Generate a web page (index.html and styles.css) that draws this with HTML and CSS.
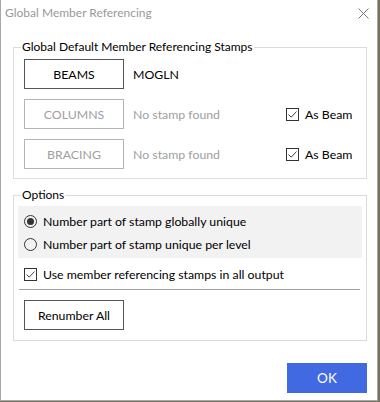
FILE: index.html
```html
<!DOCTYPE html>
<html lang="en">
<head>
  <meta charset="UTF-8">
  <meta name="viewport" content="width=device-width, initial-scale=1.0">
  <title>Global Member Referencing</title>
  <link rel="stylesheet" href="styles.css">
</head>
<body>
  <div class="window">
    <div class="titlebar">
      <span class="title">Global Member Referencing</span>
      <svg class="close" width="11" height="11" viewBox="0 0 11 11">
        <path d="M0.5 0.5 L10.5 10.5 M10.5 0.5 L0.5 10.5" stroke="#777" stroke-width="1" fill="none"/>
      </svg>
    </div>

    <!-- Stamps -->
    <fieldset class="group">
      <legend>Global Default Member Referencing Stamps</legend>
      <div class="group-body stamps">
        <button class="btn">BEAMS</button>
        <span class="stamp">MOGLN</span>
        <span></span>

        <button class="btn disabled">COLUMNS</button>
        <span class="stamp muted">No stamp found</span>
        <label class="check">
          <span class="box">
            <svg width="11" height="11" viewBox="0 0 11 11"><path d="M1.5 5.5 L4.2 8.2 L9.5 2.5" stroke="#444" stroke-width="1" fill="none"/></svg>
          </span>
          As Beam
        </label>

        <button class="btn disabled">BRACING</button>
        <span class="stamp muted">No stamp found</span>
        <label class="check">
          <span class="box">
            <svg width="11" height="11" viewBox="0 0 11 11"><path d="M1.5 5.5 L4.2 8.2 L9.5 2.5" stroke="#444" stroke-width="1" fill="none"/></svg>
          </span>
          As Beam
        </label>
      </div>
    </fieldset>

    <!-- Options -->
    <fieldset class="group options">
      <legend>Options</legend>
      <div class="group-body">
        <div class="radio-panel">
          <label class="radio-row">
            <span class="radio checked"></span>
            Number part of stamp globally unique
          </label>
          <label class="radio-row">
            <span class="radio"></span>
            Number part of stamp unique per level
          </label>
        </div>
        <label class="check check-row">
          <span class="box">
            <svg width="11" height="11" viewBox="0 0 11 11"><path d="M1.5 5.5 L4.2 8.2 L9.5 2.5" stroke="#444" stroke-width="1" fill="none"/></svg>
          </span>
          Use member referencing stamps in all output
        </label>
        <hr class="separator">
        <button class="btn renumber">Renumber All</button>
      </div>
    </fieldset>

    <div class="footer">
      <button class="ok">OK</button>
    </div>
  </div>
</body>
</html>
```
FILE: styles.css
```css
body {
  margin: 0;
  background-color: #76735a;
  font-family: Lato, "Noto Sans", sans-serif;
  font-size: 12.3px;
  color: #000;
}

.window {
  width: 378px;
  height: 401px;
  box-sizing: border-box;
  background-color: #fff;
  border: 1px solid #a8a8a8;
  border-top: none;
  display: flex;
  flex-direction: column;
}

.titlebar {
  height: 40px;
  display: flex;
  align-items: flex-start;
  padding: 5px 0 0 4px;
  box-sizing: border-box;
}

.title {
  line-height: 16px;
  font-size: 12px;
  color: #999;
}

.close {
  margin: 3px 8px 0 auto;
}

.group {
  margin: 0 10px 0 12px;
  padding: 0;
  border: 1px solid #dcdcdc;
  min-width: 0;
}

.group legend {
  margin-left: 7px;
  padding: 0 1px;
  line-height: 14px;
  font-size: 12px;
}

.stamps {
  display: grid;
  grid-template-columns: 100px 144px auto;
  grid-auto-rows: 30px;
  column-gap: 9px;
  row-gap: 10px;
  align-items: center;
  padding: 5px 0 9px 10px;
}

.btn {
  width: 100px;
  height: 30px;
  box-sizing: border-box;
  border: 1px solid #555;
  background-color: #fff;
  font-family: inherit;
  font-size: inherit;
  color: #000;
  padding: 0;
}

.btn.disabled {
  border-color: #b4b4b4;
  color: #a0a0a0;
}

.muted {
  color: #a0a0a0;
}

.check {
  display: flex;
  align-items: center;
  gap: 6px;
}

.box {
  width: 13px;
  height: 13px;
  box-sizing: border-box;
  border: 1px solid #333;
  display: flex;
  align-items: center;
  justify-content: center;
}

.options {
  margin-top: 9px;
}

.options .group-body {
  padding: 4px 4px 10px 4px;
}

.radio-panel {
  background-color: #f2f2f2;
  padding: 4px 0 2px 6px;
}

.radio-row {
  height: 23px;
  display: flex;
  align-items: center;
  gap: 6px;
}

.radio {
  width: 13px;
  height: 13px;
  box-sizing: border-box;
  border: 1px solid #333;
  border-radius: 50%;
  display: flex;
  align-items: center;
  justify-content: center;
}

.radio.checked::after {
  content: "";
  width: 7px;
  height: 7px;
  border-radius: 50%;
  background-color: #333;
}

.check-row {
  height: 23px;
  margin: 5px 0 0 6px;
}

.separator {
  border: none;
  border-top: 1px solid #a0a0a0;
  margin: 3px 2px 0 1px;
}

.renumber {
  margin: 10px 0 0 6px;
  display: block;
}

.footer {
  display: flex;
  justify-content: flex-end;
  padding: 22px 10px 0 0;
}

.ok {
  width: 80px;
  height: 30px;
  border: none;
  background-color: #4169e1;
  color: #fff;
  font-family: inherit;
  font-size: 13.5px;
}
```
